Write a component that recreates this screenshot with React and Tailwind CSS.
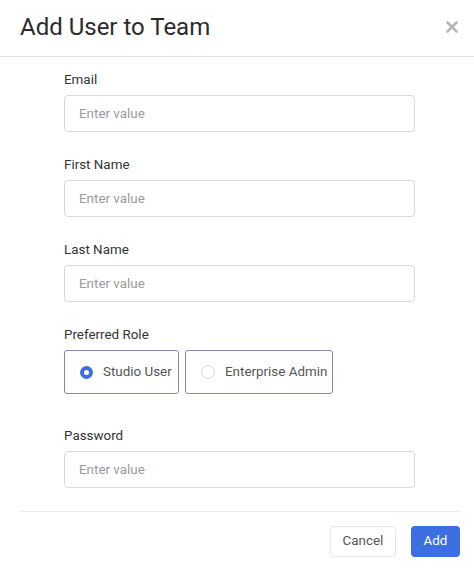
import React, { useState } from "react";

const font = { fontFamily: "Roboto, 'Liberation Sans', sans-serif" };

function Field({ label, type = "text" }) {
  return (
    <div className="flex flex-col">
      <label className="text-[13.4px] leading-[20px] text-[#333] mb-[5px]">{label}</label>
      <input
        type={type}
        placeholder="Enter value"
        className="w-[351px] h-[37px] rounded-[4px] border border-[#d9d9d9] px-[14px] text-[13.4px] text-[#333] placeholder:text-[#9b9b9b] outline-none"
      />
    </div>
  );
}

function RoleOption({ label, checked, onClick, width }) {
  return (
    <button
      onClick={onClick}
      className={`${width} h-[44px] rounded-[3px] border border-[#8886b0] flex items-center pl-[15px] gap-[10px] bg-white`}
    >
      {checked ? (
        <span className="w-[13px] h-[13px] rounded-full border-[4px] border-[#3d6fe3] bg-white shrink-0" />
      ) : (
        <span className="w-[14px] h-[14px] rounded-full border border-[#d4d4d4] bg-white shrink-0" />
      )}
      <span className="text-[13.4px] text-[#555] whitespace-nowrap">{label}</span>
    </button>
  );
}

export default function App() {
  const [role, setRole] = useState("studio");

  return (
    <div className="w-[474px] h-[568px] bg-white overflow-hidden" style={font}>
      {/* header */}
      <div className="h-[57px] flex items-center justify-between pl-[20px] pr-[16px] border-b border-[#e3e3e3]">
        <h1 className="text-[24px] text-[#2b2b2b] font-normal leading-none -mt-[2px]">Add User to Team</h1>
        <svg width="12" height="12" viewBox="0 0 12 12" className="-mt-[3px]">
          <path d="M1.5 1.5 L10.5 10.5 M10.5 1.5 L1.5 10.5" stroke="#b8b8b8" strokeWidth="2.6" strokeLinecap="round" />
        </svg>
      </div>

      {/* body */}
      <div className="pl-[64px] pt-[13px] flex flex-col gap-[23px]">
        <Field label="Email" />
        <Field label="First Name" />
        <Field label="Last Name" />
        <div className="flex flex-col">
          <label className="text-[13.4px] leading-[20px] text-[#333] mb-[5px]">Preferred Role</label>
          <div className="flex gap-[6px]">
            <RoleOption label="Studio User" width="w-[115px]" checked={role === "studio"} onClick={() => setRole("studio")} />
            <RoleOption label="Enterprise Admin" width="w-[148px]" checked={role === "admin"} onClick={() => setRole("admin")} />
          </div>
        </div>
        <div className="pt-[9px]">
          <Field label="Password" type="password" />
        </div>
      </div>

      {/* footer */}
      <div className="ml-[20px] mr-[14px] mt-[23px] border-t border-[#ececec] pt-[14px] flex justify-end gap-[15px]">
        <button className="w-[66px] h-[31px] rounded-[4px] border border-[#e6e6e6] text-[13.4px] text-[#555] bg-white">Cancel</button>
        <button className="w-[49px] h-[31px] rounded-[4px] bg-[#3d6fe3] text-[13.4px] text-white">Add</button>
      </div>
    </div>
  );
}
